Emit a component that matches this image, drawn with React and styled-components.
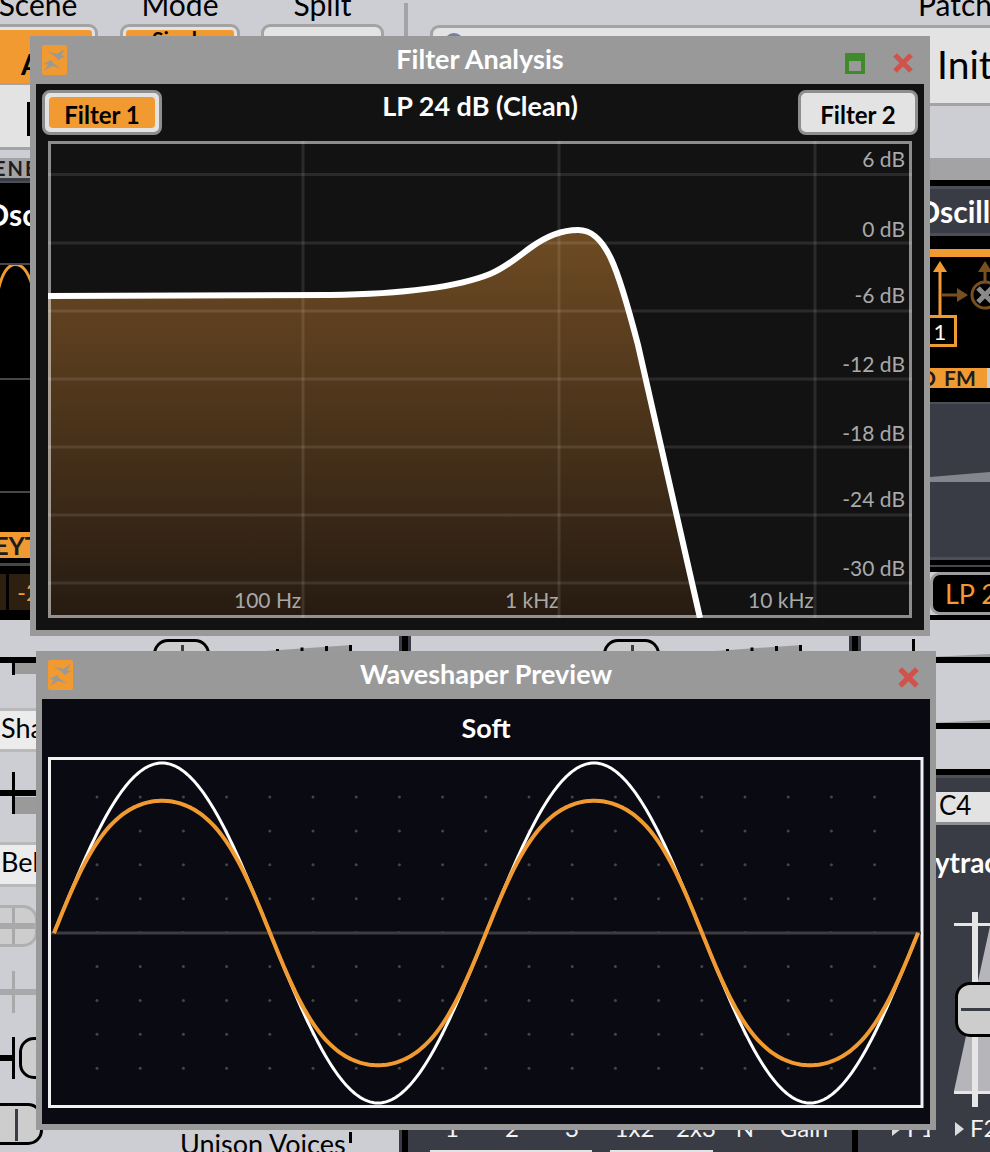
import React from "react";
import styled, { createGlobalStyle } from "styled-components";

const ORANGE = "#f19a31";
const PANEL = "#3a3c45";
const EDGE = "#4c4e58";
const GREY = "#a3a3a5";
const SILVER = "#e3e3e3";
const BG = "#cdced3";
const KNOB = "#cdcdcd";

const Global = createGlobalStyle`
  html, body { margin: 0; background: ${BG}; }
  body { font-family: Lato, "Liberation Sans", sans-serif; }
`;

const Page = styled.div`
  position: relative;
  width: 990px;
  height: 1152px;
  overflow: hidden;
  background: ${BG};
  color: #000;
`;

/* ---------- backdrop: the synth panel behind the floating windows ---------- */

const TopBar = styled.header`
  display: flex;
  height: 36px;
  overflow: hidden;
`;
const TopGroup = styled.div`
  flex: none;
  width: ${(p) => p.$w}px;
  margin-left: ${(p) => p.$ml}px;
`;
const TopLabel = styled.div`
  margin-top: -9px;
  height: 28px;
  font-size: 30px;
  line-height: 27px;
  text-align: center;
`;
const TopButton = styled.div`
  margin-top: 5px;
  height: 60px;
  box-sizing: border-box;
  border: 3px solid ${GREY};
  border-radius: 9px;
  background: ${SILVER};
  padding: 3px;
`;
const TopSegment = styled.div`
  height: 40px;
  border-radius: 3px;
  background: ${ORANGE};
  font-size: 21px;
  line-height: 17px;
  font-weight: 700;
  text-align: center;
`;
const TopDivider = styled.div`
  flex: none;
  width: 4px;
  margin: 3px 0 0 20px;
  background: ${GREY};
`;
const PatchGroup = styled.div`
  flex: 1;
  margin-left: 22px;
  min-width: 0;
`;
const PatchLabel = styled.div`
  margin-top: -9px;
  height: 28px;
  padding-left: 488px;
  font-size: 30px;
  line-height: 27px;
  white-space: nowrap;
`;
const PatchBox = styled.div`
  margin-top: 6px;
  height: 40px;
  border: 3px solid ${GREY};
  border-right: 0;
  border-radius: 9px 0 0 0;
  background: ${SILVER};
  padding: 5px 0 0 11px;
`;
const SearchDot = styled.div`
  width: 20px;
  height: 20px;
  border-radius: 50%;
  background: #6d83a0;
`;

const Backdrop = styled.div`
  display: grid;
  grid-template-columns: 36px 894px 60px;
`;
const Strip = styled.div`
  display: flex;
  flex-direction: column;
  min-width: 0;
`;
const Band = styled.div`
  flex: none;
  height: ${(p) => p.$h}px;
  background: ${(p) => p.$bg || "transparent"};
`;
const SlopedRule = styled.div`
  flex: none;
  height: ${(p) => p.$h}px;
  background: ${(p) => p.$bg};
  clip-path: polygon(0 ${(p) => p.$from}%, 100% 0, 100% 100%, 0 100%);
`;

const OrangeBlock = styled.div`
  flex: none;
  height: 47px;
  background: ${ORANGE};
  font-size: 28px;
  font-weight: 700;
  line-height: 47px;
  padding: 5px 0 0 21px;
  box-sizing: border-box;
  overflow: hidden;
`;
const SilverPanel = styled.div`
  flex: none;
  height: 62px;
  box-sizing: border-box;
  padding: 17px 0 0 27px;
  background: ${SILVER};
`;
const Glyph = styled.div`
  width: 3px;
  height: 34px;
  background: #000;
`;
const SectionTag = styled.div`
  flex: none;
  height: 20px;
  background: ${GREY};
  font-size: 20px;
  font-weight: 700;
  letter-spacing: 2px;
  line-height: 21px;
  color: #1c1c1f;
  white-space: nowrap;
  text-indent: -6px;
  overflow: hidden;
`;
const BlackPanel = styled.div`
  flex: none;
  background: #000;
  height: ${(p) => p.$h}px;
`;
const LeftOsc = styled.div`
  height: 80px;
  box-sizing: border-box;
  padding-top: 15px;
  text-indent: -15px;
  color: #fff;
  font-size: 30px;
  font-weight: 700;
  line-height: 32px;
  white-space: nowrap;
`;
const GreyRule = styled.div`
  height: ${(p) => p.$h || 2}px;
  background: #474747;
`;
const WaveSvg = styled.svg`
  display: block;
`;
const Spacer = styled.div`
  height: ${(p) => p.$h}px;
`;
const OrangeTag = styled.div`
  height: ${(p) => p.$h}px;
  width: ${(p) => p.$w || "auto"};
  background: ${ORANGE};
  color: #1c1c1f;
  font-weight: 700;
  font-size: ${(p) => p.$size}px;
  word-spacing: ${(p) => p.$space || 0}px;
  line-height: ${(p) => p.$h}px;
  text-indent: ${(p) => p.$indent}px;
  white-space: nowrap;
  overflow: hidden;
`;
const ValueRow = styled.div`
  display: flex;
  gap: 3px;
  height: 36px;
`;
const ValueCell = styled.div`
  flex: none;
  width: ${(p) => p.$w}px;
  background: #2e2010;
  color: ${ORANGE};
  font-size: 24px;
  line-height: 36px;
  padding-left: ${(p) => p.$pad || 0}px;
  box-sizing: border-box;
  white-space: nowrap;
  overflow: hidden;
`;
const TopTick = styled.div`
  height: 18px;
  background:
    linear-gradient(#000, #000) 12px 0 / 3px 100% no-repeat,
    linear-gradient(#000, #000) 0 0 / 100% 6px no-repeat,
    linear-gradient(#9a9a9a, #9a9a9a) 15px 6px / 100% 11px no-repeat;
`;
const Cross = styled.div`
  height: 42px;
  width: ${(p) => p.$w || "36px"};
  flex: none;
  background:
    linear-gradient(${(p) => p.$c}, ${(p) => p.$c}) 12px 0 / 3px 100% no-repeat,
    linear-gradient(${(p) => p.$c}, ${(p) => p.$c}) 0 50% / 100% 6px no-repeat
    ${(p) =>
      p.$wedge ? `, linear-gradient(#9a9a9a, #9a9a9a) 15px 100% / 100% 17px no-repeat` : ""};
`;
const InputField = styled.div`
  flex: none;
  height: ${(p) => p.$h}px;
  border-top: 3px solid #b9b9bb;
  border-bottom: 3px solid #b9b9bb;
  background: #ececec;
  font-size: 27px;
  line-height: 34px;
  padding-left: 1px;
  white-space: nowrap;
  overflow: hidden;
`;
const GhostKnob = styled.div`
  flex: none;
  height: 42px;
  width: 38px;
  box-sizing: border-box;
  border: 3px solid #b0b0b2;
  border-left: 0;
  border-radius: 0 15px 15px 0;
  background:
    linear-gradient(#a9a9ab, #a9a9ab) 12px 0 / 3px 100% no-repeat,
    linear-gradient(#a9a9ab, #a9a9ab) 0 50% / 100% 6px no-repeat,
    ${KNOB};
`;
const CrossRow = styled.div`
  display: flex;
  gap: 4px;
  height: 42px;
`;
const Knob = styled.div`
  flex: none;
  box-sizing: border-box;
  width: ${(p) => p.$w}px;
  height: 42px;
  margin-left: ${(p) => p.$ml || 0}px;
  border: 3px solid #000;
  border-radius: 15px;
  background:
    linear-gradient(${PANEL}, ${PANEL}) ${(p) => p.$tick}px 3px / 3px 32px no-repeat,
    ${KNOB};
`;
const PlainKnob = styled(Knob)`
  background: ${KNOB};
`;

/* center column */
const GapStrip = styled.div`
  display: flex;
  height: 15px;
  padding-left: 117px;
  overflow: hidden;
`;
const GapUnit = styled.div`
  flex: none;
  width: 450px;
  display: flex;
`;
const GapKnob = styled(Knob)`
  margin-top: 3px;
  background:
    linear-gradient(${PANEL}, ${PANEL}) 25px 3px / 3px 32px no-repeat,
    ${KNOB};
`;
const TickSvg = styled.svg`
  flex: none;
  margin-left: 55px;
  display: block;
`;
const SplitBar = styled.div`
  flex: none;
  width: 12px;
  margin-left: ${(p) => p.$ml || 0}px;
  border-left: 3px solid ${PANEL};
  border-right: 3px solid ${PANEL};
  box-sizing: border-box;
  background: #000;
`;
const LoneTick = styled.div`
  flex: none;
  width: 3px;
  height: 12px;
  margin: 3px 0 0 51px;
  background: #000;
`;
const BottomRow = styled.div`
  display: grid;
  grid-template-columns: 363px 12px 438px 12px 69px;
  height: 40px;
`;
const VoicesCell = styled.div`
  display: flex;
  align-items: flex-start;
  padding: 18px 0 0 144px;
`;
const VoicesLabel = styled.div`
  font-size: 27px;
  line-height: 27px;
  white-space: nowrap;
`;
const VoicesTick = styled.div`
  width: 3px;
  height: 11px;
  margin: 2px 0 0 3px;
  background: #000;
`;
const BottomPanel = styled.div`
  background: ${PANEL};
  color: #f4f4f4;
  padding-top: 4px;
  box-sizing: border-box;
  overflow: hidden;
`;
const AmountLabels = styled.div`
  display: grid;
  grid-template-columns: 60px 60px 60px 65px 58px 40px 78px;
  padding-left: 11px;
  font-size: 24px;
  line-height: 24px;
  text-align: center;
`;
const UnderBars = styled.div`
  display: flex;
  margin: 10px 0 0 19px;
`;
const UnderBar = styled.div`
  flex: none;
  width: ${(p) => p.$w}px;
  height: 4px;
  margin-right: 18px;
  background: ${SILVER};
`;
const FilterPick = styled.div`
  display: flex;
  align-items: center;
  gap: ${(p) => p.$gap}px;
  margin-left: ${(p) => p.$ml}px;
  margin-top: ${(p) => p.$mt || 0}px;
  font-size: 24px;
  line-height: 24px;
  color: #f4f4f4;
  white-space: nowrap;
`;
const PickArrow = styled.div`
  flex: none;
  width: 0;
  height: 0;
  margin-top: 2px;
  border-left: 9px solid #dcdcdc;
  border-top: 7px solid transparent;
  border-bottom: 7px solid transparent;
`;

/* right column */
const InitPanel = styled.div`
  flex: none;
  height: 67px;
  box-sizing: border-box;
  padding: 5px 0 0 7px;
  background: ${SILVER};
  font-size: 39px;
  line-height: 47px;
  white-space: nowrap;
`;
const OscTab = styled.div`
  flex: none;
  height: 50px;
  box-sizing: border-box;
  border-top: 3px solid ${EDGE};
  border-bottom: 3px solid ${EDGE};
  padding-top: 6px;
  background: ${PANEL};
  color: #fff;
  font-size: 30px;
  font-weight: 700;
  line-height: 32px;
  text-indent: -14px;
  white-space: nowrap;
  overflow: hidden;
`;
const RoutingSvg = styled.svg`
  display: block;
  flex: none;
  background: #000;
  text {
    font-family: Lato, sans-serif;
    font-size: 22px;
    fill: #fff;
    text-anchor: middle;
  }
`;
const DarkPanel = styled.div`
  flex: none;
  height: 155px;
  box-sizing: border-box;
  border-top: 2px solid ${EDGE};
  padding-top: 68px;
  background: ${PANEL};
`;
const TypeButton = styled.div`
  flex: none;
  height: 43px;
  box-sizing: border-box;
  border: 3px solid #9d9d9f;
  border-right: 0;
  border-radius: 10px 0 0 10px;
  background: #000;
  color: ${ORANGE};
  font-size: 27px;
  line-height: 37px;
  padding-left: 12px;
  white-space: nowrap;
`;
const NoteField = styled.div`
  flex: none;
  height: 30px;
  background: ${SILVER};
  font-size: 26px;
  line-height: 26px;
  padding-left: 9px;
`;
const KeytrackPanel = styled.div`
  flex: none;
  height: 327px;
  box-sizing: border-box;
  padding-top: 21px;
  background: ${PANEL};
`;
const KeytrackTitle = styled.div`
  color: #fff;
  font-size: 28px;
  font-weight: 700;
  line-height: 32px;
  text-indent: -28px;
  white-space: nowrap;
`;
const SliderBox = styled.div`
  position: relative;
  width: 36px;
  height: 195px;
  margin: 34px 0 0 24px;
`;
const SliderKnob = styled.div`
  position: absolute;
  left: 1px;
  top: 70px;
  width: 60px;
  height: 55px;
  box-sizing: border-box;
  border: 3px solid #000;
  border-radius: 15px;
  background:
    linear-gradient(${PANEL}, ${PANEL}) 3px 50% / 100% 3px no-repeat,
    ${KNOB};
`;

/* ---------- floating windows ---------- */

const Win = styled.section`
  position: absolute;
  left: ${(p) => p.$x}px;
  top: ${(p) => p.$y}px;
  width: ${(p) => p.$w}px;
  height: ${(p) => p.$h}px;
  box-sizing: border-box;
  display: flex;
  flex-direction: column;
  padding: 0 6px 6px;
  background: #999;
`;
const TitleBar = styled.div`
  flex: none;
  height: 48px;
  display: grid;
  grid-template-columns: 1fr auto 1fr;
  align-items: center;
  padding: 0 11px;
`;
const WinTitle = styled.div`
  color: #fff;
  font-size: 27px;
  font-weight: 700;
  line-height: 32px;
  margin-bottom: 2px;
  text-align: center;
`;
const WinControls = styled.div`
  display: flex;
  justify-content: flex-end;
  align-items: center;
  gap: 28px;
  margin-top: ${(p) => p.$mt}px;
`;
const Icon = styled.svg`
  display: block;
  flex: none;
`;
const LogoIcon = styled(Icon)`
  margin-left: -5px;
`;
const Body = styled.div`
  flex: 1;
  min-height: 0;
  background: ${(p) => p.$bg};
`;
const FilterHead = styled.div`
  display: grid;
  grid-template-columns: 1fr auto 1fr;
  align-items: start;
  height: 57px;
  box-sizing: border-box;
  padding: 6px 6px 0;
`;
const HeadTitle = styled.div`
  color: #fff;
  font-size: 27px;
  font-weight: 700;
  line-height: 32px;
`;
const FilterButton = styled.button`
  justify-self: ${(p) => p.$side};
  width: 120px;
  height: 45px;
  box-sizing: border-box;
  border: 3px solid #8e8e8e;
  border-radius: 8px;
  padding: 4px;
  background: ${SILVER};
  font-family: inherit;
  font-size: 24px;
  font-weight: 700;
  color: #000;
`;
const ButtonFace = styled.span`
  display: block;
  height: 100%;
  line-height: 36px;
  border-radius: 4px;
  background: ${(p) => (p.$on ? ORANGE : "transparent")};
`;
const ChartSvg = styled.svg`
  display: block;
  margin: ${(p) => p.$m};
  text {
    font-family: Lato, sans-serif;
    font-size: 21px;
    fill: #a9a9a9;
  }
`;
const WaveTitle = styled.div`
  height: 58px;
  box-sizing: border-box;
  padding-top: 12px;
  color: #fff;
  font-size: 27px;
  font-weight: 700;
  line-height: 34px;
  text-align: center;
`;

const Logo = () => (
  <LogoIcon width="25" height="30" viewBox="0 0 25 30">
    <rect width="25" height="30" rx="2" fill={ORANGE} />
    <path d="M6 6.5 L15 9 L23 4 L19 10.5 L23.5 11 L16 15 L14 12 Z" fill="#999" />
    <path d="M19 23.5 L10 21 L2 26 L6 19.5 L1.5 19 L9 15 L11 18 Z" fill="#999" />
  </LogoIcon>
);
const CloseIcon = ({ size = 20 }) => (
  <Icon width={size} height={size} viewBox="0 0 20 20">
    <path d="M2 2 L18 18 M18 2 L2 18" stroke="#cf524b" strokeWidth="5" />
  </Icon>
);
const MaxIcon = () => (
  <Icon width="20" height="21" viewBox="0 0 20 21">
    <path fillRule="evenodd" d="M0 0H20V21H0Z M4 8V18H16V8Z" fill="#3f8a2b" />
  </Icon>
);

const dbLabels = [
  ["6 dB", 167], ["0 dB", 237], ["-6 dB", 303], ["-12 dB", 372],
  ["-18 dB", 441], ["-24 dB", 507], ["-30 dB", 576],
];
const hzLabels = [["100 Hz", 234], ["1 kHz", 505], ["10 kHz", 748]];
const hLines = [174.5, 243, 311, 379, 447, 515, 583];
const vLines = [303, 559, 815];
const curve =
  "M48 296 C150 296 250 296 330 295 C400 294 455 288 490 274 C505 268 518 257 530 248 C545 237 560 230 578 230 C606 230 618 268 638 345 L700 618";

const FilterChart = () => (
  <ChartSvg $m="0 12px" width="864" height="477" viewBox="48 141 864 477">
    <defs>
      <linearGradient id="fillGrad" gradientUnits="userSpaceOnUse" x1="0" y1="230" x2="0" y2="618">
        <stop offset="0" stopColor="#6e4b23" />
        <stop offset="1" stopColor="#261b12" />
      </linearGradient>
    </defs>
    <path d={`${curve} L48 618 Z`} fill="url(#fillGrad)" />
    {hLines.map((y) => (
      <line key={y} x1="48" x2="912" y1={y} y2={y} stroke="rgba(255,255,255,.1)" strokeWidth="3" />
    ))}
    {vLines.map((x) => (
      <line key={x} x1={x} x2={x} y1="141" y2="618" stroke="rgba(255,255,255,.1)" strokeWidth="3" />
    ))}
    <rect x="49.5" y="142.5" width="861" height="474" fill="none" stroke="rgba(255,255,255,.52)" strokeWidth="3" />
    {dbLabels.map(([t, y]) => (
      <text key={t} x="905" y={y} textAnchor="end">{t}</text>
    ))}
    {hzLabels.map(([t, x]) => (
      <text key={t} x={x} y="608">{t}</text>
    ))}
    <path d={curve} fill="none" stroke="#fff" strokeWidth="6" />
  </ChartSvg>
);

const wavePoints = (shape) => {
  const pts = [];
  for (let x = 54; x <= 918; x += 2) {
    const s = Math.sin(((x - 54) / 432) * 2 * Math.PI);
    pts.push(`${x},${(933 - 170 * shape(s)).toFixed(2)}`);
  }
  return pts.join(" ");
};
const dotXs = Array.from({ length: 19 }, (_, i) => 97 + i * 43.2);
const dotYs = Array.from({ length: 9 }, (_, i) => 797 + i * 33.9);

const WaveChart = () => (
  <ChartSvg $m="0 6px" width="876" height="351" viewBox="48 757 876 351">
    <rect x="49.5" y="758.5" width="872.5" height="348" fill="none" stroke="#f2f2f2" strokeWidth="3" />
    {dotYs.flatMap((y) =>
      dotXs.map((x) => <circle key={`${x}-${y}`} cx={x} cy={y} r="1.5" fill="#44454a" />)
    )}
    <line x1="51" x2="921" y1="933" y2="933" stroke="#3d3d40" strokeWidth="3" />
    <polyline points={wavePoints((s) => s)} fill="none" stroke="#fff" strokeWidth="3" />
    <polyline
      points={wavePoints((s) => 1.05 * Math.tanh(s / 1.05))}
      fill="none"
      stroke={ORANGE}
      strokeWidth="4"
    />
  </ChartSvg>
);

const GapTicks = () => (
  <TickSvg width="87" height="15" viewBox="265 636 87 15">
    <polygon points="265,651 352,645 352,651" fill="#9a9a9a" />
    <path d="M277.5 649V651M302 647.5V651M326.5 646V651M350.5 645V651" stroke="#000" strokeWidth="3" />
  </TickSvg>
);

export default function App() {
  return (
    <Page>
      <Global />
      <TopBar>
        <TopGroup $ml={-22} $w={120}>
          <TopLabel>Scene</TopLabel>
          <TopButton>
            <TopSegment />
          </TopButton>
        </TopGroup>
        <TopGroup $ml={22} $w={120}>
          <TopLabel>Mode</TopLabel>
          <TopButton>
            <TopSegment>Single</TopSegment>
          </TopButton>
        </TopGroup>
        <TopGroup $ml={21} $w={123}>
          <TopLabel>Split</TopLabel>
          <TopButton />
        </TopGroup>
        <TopDivider />
        <PatchGroup>
          <PatchLabel>Patch</PatchLabel>
          <PatchBox>
            <SearchDot />
          </PatchBox>
        </PatchGroup>
      </TopBar>

      <Backdrop>
        <Strip>
          <OrangeBlock>A</OrangeBlock>
          <Band $h={2} $bg={GREY} />
          <SilverPanel>
            <Glyph />
          </SilverPanel>
          <Band $h={3} $bg={GREY} />
          <Band $h={8} />
          <SectionTag>ENE</SectionTag>
          <Band $h={3} $bg={PANEL} />
          <Band $h={2} $bg={EDGE} />
          <BlackPanel $h={437}>
            <LeftOsc>Osc</LeftOsc>
            <GreyRule />
            <WaveSvg width="36" height="113" viewBox="0 265 36 113">
              <path d="M-2 291 Q4 264 16 264.5 Q27 265 34 291" fill="none" stroke={ORANGE} strokeWidth="3" />
            </WaveSvg>
            <GreyRule />
            <Spacer $h={111} />
            <GreyRule />
            <Spacer $h={39} />
            <OrangeTag $h={26} $size={25} $indent={-23}>KEYT</OrangeTag>
            <Spacer $h={5} />
            <GreyRule $h={3} />
            <Spacer $h={8} />
            <ValueRow>
              <ValueCell $w={6} />
              <ValueCell $w={27} $pad={8}>-2</ValueCell>
            </ValueRow>
          </BlackPanel>
          <Spacer $h={37} />
          <TopTick />
          <Spacer $h={33} />
          <InputField $h={38}>Sha</InputField>
          <Spacer $h={20} />
          <Cross $c="#000" $wedge />
          <Spacer $h={28} />
          <InputField $h={39}>Bel</InputField>
          <Spacer $h={18} />
          <GhostKnob />
          <Spacer $h={24} />
          <Cross $c="#a9a9ab" />
          <Spacer $h={24} />
          <CrossRow>
            <Cross $c="#000" $w="15px" />
            <PlainKnob $w={40} />
          </CrossRow>
          <Spacer $h={24} />
          <Knob $w={57} $ml={-14} $tick={26} />
        </Strip>

        <Strip>
          <Spacer $h={600} />
          <GapStrip>
            <GapUnit>
              <GapKnob $w={57} />
              <GapTicks />
              <SplitBar $ml={47} />
            </GapUnit>
            <GapUnit>
              <GapKnob $w={57} />
              <GapTicks />
              <SplitBar $ml={47} />
              <LoneTick />
            </GapUnit>
          </GapStrip>
          <Spacer $h={461} />
          <BottomRow>
            <VoicesCell>
              <VoicesLabel>Unison Voices</VoicesLabel>
              <VoicesTick />
            </VoicesCell>
            <SplitBar />
            <BottomPanel>
              <AmountLabels>
                <span>1</span><span>2</span><span>3</span><span>1x2</span><span>2x3</span><span>N</span><span>Gain</span>
              </AmountLabels>
              <UnderBars>
                <UnderBar $w={162} />
                <UnderBar $w={103} />
              </UnderBars>
            </BottomPanel>
            <SplitBar />
            <BottomPanel>
              <FilterPick $gap={6} $ml={31}>
                <PickArrow />
                F1
              </FilterPick>
            </BottomPanel>
          </BottomRow>
        </Strip>

        <Strip>
          <InitPanel>Init</InitPanel>
          <Band $h={3} $bg={GREY} />
          <Band $h={52} />
          <Band $h={22} $bg={GREY} />
          <Band $h={6} $bg="#000" />
          <OscTab>Oscill</OscTab>
          <Band $h={13} $bg="#000" />
          <Band $h={8} $bg={ORANGE} />
          <RoutingSvg width="60" height="111" viewBox="930 257 60 111">
            <path d="M940 270V316" stroke={ORANGE} strokeWidth="3" />
            <path d="M933 272H947L940 261Z" fill={ORANGE} />
            <path d="M942 295H958" stroke="#7a4f1f" strokeWidth="3" />
            <path d="M957 288V302L968 295Z" fill="#7a4f1f" />
            <circle cx="985" cy="295" r="13" fill="none" stroke="#7a4f1f" strokeWidth="3" />
            <path d="M978 288L992 302M992 288L978 302" stroke="#8a8a8a" strokeWidth="5" />
            <path d="M985 270V282" stroke="#7a4f1f" strokeWidth="3" />
            <path d="M978 272H992L985 261Z" fill="#7a4f1f" />
            <rect x="925" y="316.5" width="30.5" height="29" fill="none" stroke={ORANGE} strokeWidth="3" />
            <text x="940" y="340">1</text>
          </RoutingSvg>
          <OrangeTag $h={20} $w="57px" $size={21} $space={3} $indent={-11}>O FM</OrangeTag>
          <Band $h={14} $bg="#000" />
          <DarkPanel>
            <SlopedRule $h={10} $bg="#85868d" $from={50} />
          </DarkPanel>
          <Band $h={3} $bg={EDGE} />
          <Band $h={5} $bg="#000" />
          <Band $h={2} $bg="#47474d" />
          <Band $h={5} $bg="#000" />
          <TypeButton>LP 24 dB</TypeButton>
          <Band $h={5} $bg="#000" />
          <Spacer $h={34} />
          <SlopedRule $h={3} $bg="#9a9a9a" $from={100} />
          <Band $h={6} $bg="#000" />
          <Spacer $h={57} />
          <SlopedRule $h={3} $bg="#9a9a9a" $from={100} />
          <Band $h={6} $bg="#000" />
          <Spacer $h={40} />
          <Band $h={6} $bg="#000" />
          <Band $h={3} $bg={EDGE} />
          <Band $h={14} $bg={PANEL} />
          <NoteField>C4</NoteField>
          <Band $h={3} $bg="#8f9096" />
          <KeytrackPanel>
            <KeytrackTitle>Keytrack</KeytrackTitle>
            <SliderBox>
              <Icon width="36" height="195" viewBox="954 912 36 195">
                <polygon points="954,1091 990,926 990,1091" fill="#b5b5ba" />
                <path d="M975 912V1107" stroke="#e6e6e6" strokeWidth="6" />
                <path d="M954 924.5H990M954 1092.5H990" stroke="#e6e6e6" strokeWidth="3" />
              </Icon>
              <SliderKnob />
            </SliderBox>
            <FilterPick $gap={6} $ml={25} $mt={9}>
              <PickArrow />
              F2
            </FilterPick>
          </KeytrackPanel>
        </Strip>
      </Backdrop>

      <Win $x={30} $y={36} $w={900} $h={600}>
        <TitleBar>
          <Logo />
          <WinTitle>Filter Analysis</WinTitle>
          <WinControls $mt={6}>
            <MaxIcon />
            <CloseIcon />
          </WinControls>
        </TitleBar>
        <Body $bg="#121212">
          <FilterHead>
            <FilterButton $side="start">
              <ButtonFace $on>Filter 1</ButtonFace>
            </FilterButton>
            <HeadTitle>LP 24 dB (Clean)</HeadTitle>
            <FilterButton $side="end">
              <ButtonFace>Filter 2</ButtonFace>
            </FilterButton>
          </FilterHead>
          <FilterChart />
        </Body>
      </Win>

      <Win $x={36} $y={651} $w={900} $h={479}>
        <TitleBar>
          <Logo />
          <WinTitle>Waveshaper Preview</WinTitle>
          <WinControls $mt={5}>
            <CloseIcon size={21} />
          </WinControls>
        </TitleBar>
        <Body $bg="#0a0b12">
          <WaveTitle>Soft</WaveTitle>
          <WaveChart />
        </Body>
      </Win>
    </Page>
  );
}
